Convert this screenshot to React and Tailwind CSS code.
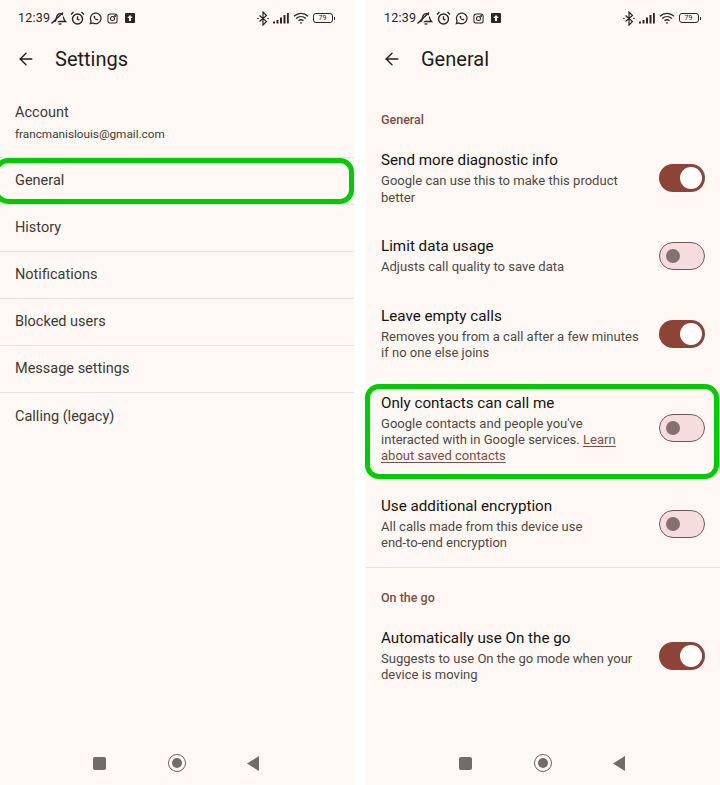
import React from 'react';
import { ArrowLeft } from 'lucide-react';

const StatusBar = () => (
  <div className="flex items-center justify-between h-[36px] pl-[18px] pr-[19px] text-[#2b2624]">
    <div className="flex items-center">
      <span className="text-[12.5px] leading-none tracking-[0.2px] w-[31px]">12:39</span>
      <svg width="17" height="15" viewBox="0 0 17 15" className="ml-[1px]" fill="none" stroke="#2b2624" strokeWidth="1.3">
        <path d="M5 10.500c1-1 1-3 1.800-5 .7-1.800 2-2.800 3.400-2.800 1.500 0 2.600 1 3 2.800.3 1.500.5 3.500 2.300 5z" />
        <path d="M8.500 13h3" />
        <path d="M3 14 15 3" stroke="#fff8f4" strokeWidth="1.500" />
        <path d="M1.500 12.500 13 1.500" strokeWidth="1.400" />
      </svg>
      <svg width="15" height="15" viewBox="0 0 15 15" className="ml-[3px]" fill="none" stroke="#2b2624" strokeWidth="1.400">
        <circle cx="7.500" cy="8" r="5" />
        <path d="M7.500 5.300v2.900l1.900 1M1 3.500 3.500 1M14 3.500 11.500 1" />
      </svg>
      <svg width="13" height="13" viewBox="0 0 13 13" className="ml-[4px]" fill="none" stroke="#2b2624" strokeWidth="1.200">
        <path d="M1.300 11.700l.8-2.800A5.300 5.300 0 1 1 4 10.900z" />
        <path d="M4.500 4.300c0 2 2 4.200 4.200 4.200l.6-1.200-1.400-.7-.6.600c-.7-.3-1.100-.8-1.400-1.400l.6-.6-.7-1.400z" fill="#2b2624" stroke="none" />
      </svg>
      <svg width="11" height="11" viewBox="0 0 12 12" className="ml-[5px]" fill="none" stroke="#2b2624" strokeWidth="1.100">
        <rect x="1" y="1" width="10" height="10" rx="2.600" />
        <circle cx="6" cy="6" r="2.200" />
        <circle cx="8.800" cy="3.200" r=".5" fill="#2b2624" />
      </svg>
      <svg width="10" height="10" viewBox="0 0 10 10" className="ml-[7px]">
        <rect width="10" height="10" rx="1" fill="#2b2624" />
        <path d="M5 2 2.200 5H4v3h2V5h1.800z" fill="#fff8f4" />
      </svg>
    </div>
    <div className="flex items-center">
      <svg width="12" height="15" viewBox="0 0 12 15" fill="none" stroke="#2b2624" strokeWidth="1.200">
        <path d="M2.500 4.500 9.500 10.500 6 14V1l3.500 3.500-7 6" />
        <circle cx="1" cy="7.500" r=".8" fill="#2b2624" stroke="none" />
        <circle cx="11" cy="7.500" r=".8" fill="#2b2624" stroke="none" />
      </svg>
      <svg width="16" height="11" viewBox="0 0 16 11" className="ml-[4px]" fill="#2b2624">
        <rect x="0" y="8.500" width="2" height="2" />
        <rect x="3.500" y="7" width="2" height="3.500" />
        <rect x="7" y="4.500" width="2" height="6" />
        <rect x="10.500" y="2" width="2" height="8.500" />
        <rect x="14" y="0" width="1.800" height="10.500" />
      </svg>
      <svg width="16" height="12" viewBox="0 0 16 12" className="ml-[4px]" fill="none" stroke="#2b2624" strokeWidth="1.300">
        <path d="M1 4.200C5 .4 11 .4 15 4.200M3.200 6.500c2.800-2.600 6.800-2.600 9.600 0M5.500 8.800c1.500-1.300 3.500-1.300 5 0" />
        <circle cx="8" cy="10.800" r=".9" fill="#2b2624" stroke="none" />
      </svg>
      <div className="ml-[4px] flex items-center">
        <div className="w-[20px] h-[10px] rounded-[3px] border border-[#2b2624] flex items-center justify-center">
          <span className="text-[7px] leading-none">79</span>
        </div>
        <div className="w-[1.500px] h-[3px] bg-[#2b2624] ml-[1px]" />
      </div>
    </div>
  </div>
);

const TopBar = ({ title }) => (
  <div className="flex items-center h-[46px] mt-[1px] pb-[2px] pl-[16px]">
    <ArrowLeft size={20} strokeWidth={1.600} color="#1f1b19" />
    <span className="ml-[19px] text-[20px] leading-none text-[#1f1b19]">{title}</span>
  </div>
);

const NavBar = () => (
  <div className="mt-auto flex items-center h-[44px] pl-[93px]">
    <div className="w-[13px] h-[13px] rounded-[2px] bg-[#716c6a]" />
    <div className="ml-[62px] w-[18px] h-[18px] rounded-full border-[1.500px] border-[#6a6563] flex items-center justify-center">
      <div className="w-[10px] h-[10px] rounded-full bg-[#716c6a]" />
    </div>
    <svg width="12" height="15" viewBox="0 0 12 15" className="ml-[61px]">
      <path d="M12 0v15L0 7.500z" fill="#716c6a" />
    </svg>
  </div>
);

const SimpleRow = ({ label, highlight, last }) => (
  <div className={`relative h-[47px] flex items-center px-[15px] ${last ? '' : 'border-b border-[#e8e2de]'}`}>
    <span className="text-[14.5px] text-[#3d3835]">{label}</span>
    {highlight && (
      <div className="absolute left-[-6px] right-0 top-0 bottom-0 border-[5px] border-[#03c804] rounded-[14px]" />
    )}
  </div>
);

const Toggle = ({ on, className = '' }) =>
  on ? (
    <div className={`w-[46px] h-[28px] rounded-full bg-[#8c4338] flex items-center justify-end pr-[3px] shrink-0 ${className}`}>
      <div className="w-[22px] h-[22px] rounded-full bg-white" />
    </div>
  ) : (
    <div className={`w-[46px] h-[28px] rounded-full bg-[#f6dcdd] border-[1.500px] border-[#6f5a58] flex items-center pl-[6px] shrink-0 ${className}`}>
      <div className="w-[14px] h-[14px] rounded-full bg-[#85716f]" />
    </div>
  );

const ToggleRow = ({ title, children, on, className }) => (
  <div className={`flex items-center justify-between pl-[15px] pr-[15px] ${className}`}>
    <div className="w-[262px]">
      <div className="text-[15.2px] leading-[20px] text-[#15110f]">{title}</div>
      <div className="text-[13.05px] leading-[16.500px] text-[#4f4845] mt-[3px]">{children}</div>
    </div>
    <Toggle on={on} />
  </div>
);

const SectionTitle = ({ children }) => (
  <div className="pl-[15px] text-[12.500px] leading-[16px] font-medium text-[#7a4f47]">{children}</div>
);

export default function App() {
  return (
    <div className="flex justify-between w-[720px] h-[785px] bg-white font-['Roboto',sans-serif] overflow-hidden">
      <div className="w-[354px] h-full bg-[#fff8f4] flex flex-col">
        <StatusBar />
        <TopBar title="Settings" />
        <div className="h-[75px] flex flex-col justify-end px-[15px] pb-[14px] border-b border-[#e8e2de]">
          <div className="text-[14.5px] leading-[20px] text-[#3d3835]">Account</div>
          <div className="text-[11.75px] leading-[18px] mt-[2px] text-[#3d3835]">francmanislouis@gmail.com</div>
        </div>
        <SimpleRow label="General" highlight />
        <SimpleRow label="History" />
        <SimpleRow label="Notifications" />
        <SimpleRow label="Blocked users" />
        <SimpleRow label="Message settings" />
        <SimpleRow label="Calling (legacy)" last />
        <NavBar />
      </div>
      <div className="w-[354px] h-full bg-[#fff8f4] flex flex-col">
        <StatusBar />
        <TopBar title="General" />
        <div className="pt-[29px]">
          <SectionTitle>General</SectionTitle>
          <ToggleRow on title="Send more diagnostic info" className="mt-[22px]">
            Google can use this to make this product better
          </ToggleRow>
          <ToggleRow title="Limit data usage" className="mt-[30px]">
            Adjusts call quality to save data
          </ToggleRow>
          <ToggleRow on title="Leave empty calls" className="mt-[30px]">
            Removes you from a call after a few minutes if no one else joins
          </ToggleRow>
          <div className="mt-[22px] h-[95px] rounded-[14px] border-[5px] border-[#03c804] flex items-center justify-between pl-[10px] pr-[9px] pb-[5px] mr-[1px] -ml-px">
            <div className="w-[262px] ml-[1px]">
              <div className="text-[15.2px] leading-[20px] text-[#15110f]">Only contacts can call me</div>
              <div className="text-[13.05px] leading-[16px] text-[#4f4845] mt-[3px]">
                Google contacts and people you've interacted with in Google services.{' '}
                <span className="text-[#7a4f47] underline underline-offset-2">Learn about saved contacts</span>
              </div>
            </div>
            <Toggle className="mb-[2px]" />
          </div>
          <ToggleRow title="Use additional encryption" className="mt-[17px] pb-[15px] border-b border-[#e8e2de]">
            All calls made from this device use<br />end-to-end encryption
          </ToggleRow>
          <div className="mt-[22px]">
            <SectionTitle>On the go</SectionTitle>
          </div>
          <ToggleRow on title="Automatically use On the go" className="mt-[22px]">
            Suggests to use On the go mode when your device is moving
          </ToggleRow>
        </div>
        <NavBar />
      </div>
    </div>
  );
}
